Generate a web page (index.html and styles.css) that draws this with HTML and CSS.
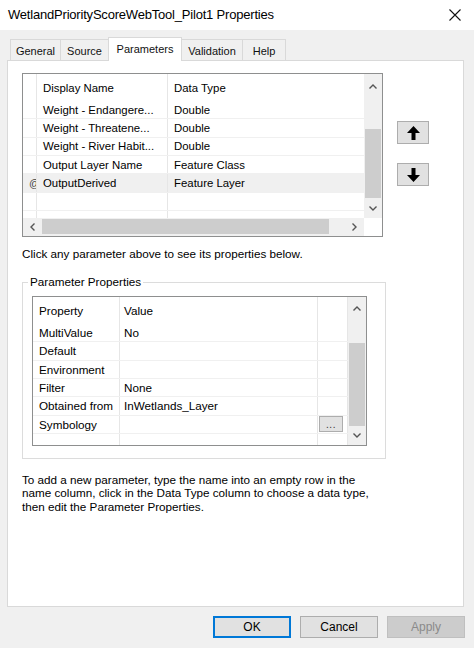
FILE: index.html
```html
<!DOCTYPE html>
<html>
<head>
<meta charset="utf-8">
<link rel="stylesheet" href="styles.css">
</head>
<body>
<div class="titlebar">
  <span class="title">WetlandPriorityScoreWebTool_Pilot1 Properties</span>
  <svg class="close" viewBox="0 0 12 12" width="12" height="12"><path d="M0.5 0.5 L11.5 11.5 M11.5 0.5 L0.5 11.5" stroke="#111" stroke-width="1.1" fill="none"/></svg>
</div>
<div class="tabs">
  <div class="tab t-general">General</div>
  <div class="tab t-source">Source</div>
  <div class="tab active t-params">Parameters</div>
  <div class="tab t-valid">Validation</div>
  <div class="tab t-help">Help</div>
</div>
<div class="panel">
  <div class="toprow">
    <div class="listbox">
      <div class="lgrid">
        <div class="lrow head"><div class="ind"></div><div class="c1">Display Name</div><div class="c2">Data Type</div></div>
        <div class="lrow"><div class="ind"></div><div class="c1">Weight - Endangere...</div><div class="c2">Double</div></div>
        <div class="lrow"><div class="ind"></div><div class="c1">Weight - Threatene...</div><div class="c2">Double</div></div>
        <div class="lrow"><div class="ind"></div><div class="c1">Weight - River Habit...</div><div class="c2">Double</div></div>
        <div class="lrow"><div class="ind"></div><div class="c1">Output Layer Name</div><div class="c2">Feature Class</div></div>
        <div class="lrow sel"><div class="ind"><span class="mark">@</span></div><div class="c1">OutputDerived</div><div class="c2">Feature Layer</div></div>
        <div class="lrow"><div class="ind"></div><div class="c1"></div><div class="c2"></div></div>
        <div class="lrow part"><div class="ind"></div><div class="c1"></div><div class="c2"></div></div>
      </div>
      <div class="vscroll">
        <div class="sbtn up1"><svg viewBox="0 0 8 5" width="8" height="5"><path d="M0.5 4.5 L4 1 L7.5 4.5" stroke="#555" stroke-width="1.4" fill="none"/></svg></div>
        <div class="track"><div class="vthumb t1"></div></div>
        <div class="sbtn dn1"><svg viewBox="0 0 8 5" width="8" height="5"><path d="M0.5 0.5 L4 4 L7.5 0.5" stroke="#555" stroke-width="1.4" fill="none"/></svg></div>
      </div>
      <div class="hscroll">
        <div class="hbtn"><svg viewBox="0 0 5 8" width="5" height="8"><path d="M4.5 0.5 L1 4 L4.5 7.5" stroke="#555" stroke-width="1.4" fill="none"/></svg></div>
        <div class="htrack"><div class="hthumb"></div></div>
        <div class="hbtn"><svg viewBox="0 0 5 8" width="5" height="8"><path d="M0.5 0.5 L4 4 L0.5 7.5" stroke="#555" stroke-width="1.4" fill="none"/></svg></div>
      </div>
      <div class="corner"></div>
    </div>
    <div class="movebtns">
      <div class="move"><svg viewBox="0 0 13 14" width="13" height="14"><path d="M6.5 0 L13 7 L8.5 7 L8.5 14 L4.5 14 L4.5 7 L0 7 Z" fill="#000"/></svg></div>
      <div class="move"><svg viewBox="0 0 13 14" width="13" height="14"><path d="M6.5 14 L13 7 L8.5 7 L8.5 0 L4.5 0 L4.5 7 L0 7 Z" fill="#000"/></svg></div>
    </div>
  </div>
  <p class="hint">Click any parameter above to see its properties below.</p>
  <fieldset class="group">
    <legend>Parameter Properties</legend>
    <div class="propbox">
      <div class="pgrid">
        <div class="prow head"><div class="p1">Property</div><div class="p2">Value</div><div class="p3"></div></div>
        <div class="prow"><div class="p1">MultiValue</div><div class="p2">No</div><div class="p3"></div></div>
        <div class="prow"><div class="p1">Default</div><div class="p2"></div><div class="p3"></div></div>
        <div class="prow"><div class="p1">Environment</div><div class="p2"></div><div class="p3"></div></div>
        <div class="prow"><div class="p1">Filter</div><div class="p2">None</div><div class="p3"></div></div>
        <div class="prow"><div class="p1">Obtained from</div><div class="p2">InWetlands_Layer</div><div class="p3"></div></div>
        <div class="prow"><div class="p1">Symbology</div><div class="p2"></div><div class="p3"><div class="dots">...</div></div></div>
        <div class="prow part"><div class="p1"></div><div class="p2"></div><div class="p3"></div></div>
      </div>
      <div class="vscroll">
        <div class="sbtn up2"><svg viewBox="0 0 8 5" width="8" height="5"><path d="M0.5 4.5 L4 1 L7.5 4.5" stroke="#555" stroke-width="1.4" fill="none"/></svg></div>
        <div class="track"><div class="vthumb t2"></div></div>
        <div class="sbtn dn2"><svg viewBox="0 0 8 5" width="8" height="5"><path d="M0.5 0.5 L4 4 L7.5 0.5" stroke="#555" stroke-width="1.4" fill="none"/></svg></div>
      </div>
    </div>
  </fieldset>
  <p class="help"><span>To add a new parameter, type the name into an empty row in the</span><span>name column, click in the Data Type column to choose a data type,</span><span>then edit the Parameter Properties.</span></p>
</div>
<div class="footer">
  <div class="btn ok">OK</div>
  <div class="btn">Cancel</div>
  <div class="btn disabled">Apply</div>
</div>
</body>
</html>
```

FILE: styles.css
```css
* { box-sizing: border-box; }
html, body { margin: 0; padding: 0; }
body {
  width: 474px;
  height: 648px;
  overflow: hidden;
  background: #f0f0f0;
  font-family: "Liberation Sans", Arial, sans-serif;
  color: #000;
}

.titlebar {
  height: 30px;
  background: #fff;
  display: flex;
  align-items: center;
  justify-content: space-between;
  padding: 0 13px 2px 8px;
}
.title { font-size: 13px; letter-spacing: -0.2px; white-space: nowrap; }
.close { display: block; margin-top: 2px; }

.tabs {
  height: 30px;
  display: flex;
  align-items: flex-end;
  padding-left: 10px;
  font-size: 11px;
}
.tab {
  height: 21px;
  border: 1px solid #d9d9d9;
  border-bottom: 0;
  margin-right: -1px;
  display: flex;
  align-items: center;
  justify-content: center;
  padding-top: 2px;
  background: #f0f0f0;
  color: #111;
}
.t-general { width: 51px; }
.t-source { width: 49px; }
.t-params { width: 74px; }
.t-valid { width: 62px; }
.t-help { width: 44px; }
.tab.active {
  height: 24px;
  margin-bottom: -1px;
  background: #fff;
  position: relative;
  z-index: 1;
  padding-top: 0;
  padding-bottom: 2px;
}

.panel {
  margin: 0 10px 0 7px;
  height: 547px;
  background: #fff;
  border: 1px solid #d9d9d9;
  padding: 12px 0 0 14px;
}

.toprow { display: flex; gap: 14px; }

.listbox {
  width: 361px;
  height: 164px;
  border: 1px solid #8e8f8f;
  display: grid;
  grid-template-columns: 1fr 18px;
  grid-template-rows: 1fr 18px;
  font-size: 11.4px;
}
.lgrid { overflow: hidden; }
.lrow {
  display: grid;
  grid-template-columns: 14px 131px 1fr;
  height: 18.33px;
  border-bottom: 1px solid #f0f0f0;
}
.lrow.head { height: 27px; border-bottom: 0; }
.lrow.part { height: 8px; border-bottom: 0; }
.lrow.sel { background: #f0f0f0; }
.lrow > div { display: flex; align-items: center; white-space: nowrap; overflow: hidden; }
.ind { border-right: 1px solid #e6e6e6; padding-left: 6px; }
.c1 { border-right: 1px solid #e6e6e6; padding-left: 6px; }
.c2 { padding-left: 6px; }
.mark { font-size: 11px; color: #444; }

.vscroll {
  background: #f0f0f0;
  display: flex;
  flex-direction: column;
}
.sbtn { display: flex; align-items: center; justify-content: center; }
.up1 { height: 22px; padding-top: 2px; }
.dn1 { height: 20px; }
.up2 { height: 23px; }
.dn2 { height: 19px; }
.track { flex: 1; padding: 0 1px; }
.vthumb { background: #cdcdcd; }
.t1 { margin-top: 33px; height: 69px; }
.t2 { margin-top: 23px; height: 83px; }

.hscroll {
  background: #f0f0f0;
  display: flex;
}
.hbtn { width: 19px; display: flex; align-items: center; justify-content: center; }
.htrack { flex: 1; padding: 1px 0 2px; }
.hthumb { width: 287px; height: 100%; background: #cdcdcd; }
.corner { background: #fff; }

.movebtns {
  display: flex;
  flex-direction: column;
  gap: 19px;
  margin-top: 48px;
}
.move {
  width: 32px;
  height: 23px;
  background: #e1e1e1;
  border: 1px solid #adadad;
  display: flex;
  align-items: center;
  justify-content: center;
}

.hint {
  margin: 10px 0 0;
  font-size: 11.7px;
  line-height: 14px;
  white-space: nowrap;
}

.group {
  margin: 14px 0 0;
  width: 364px;
  padding: 7px 17px 12px 9px;
  border: 1px solid #dcdcdc;
  min-width: 0;
}
.group legend {
  padding: 0 2px;
  margin-left: -4px;
  font-size: 11.7px;
  line-height: 14px;
}

.propbox {
  width: 335px;
  height: 150px;
  border: 1px solid #8e8f8f;
  display: grid;
  grid-template-columns: 1fr 18px;
  font-size: 11.7px;
}
.pgrid { overflow: hidden; }
.prow {
  display: grid;
  grid-template-columns: 87px 198px 1fr;
  height: 18.33px;
  border-bottom: 1px solid #f0f0f0;
}
.prow.head { height: 27px; border-bottom: 0; }
.prow.part { height: 12px; border-bottom: 0; }
.prow > div { display: flex; align-items: center; white-space: nowrap; overflow: hidden; }
.p1 { border-right: 1px solid #e6e6e6; padding-left: 6px; }
.p2 { border-right: 1px solid #e6e6e6; padding-left: 4px; }
.p3 { border-right: 1px solid #e6e6e6; padding-left: 1px; }
.dots {
  width: 24px;
  height: 16px;
  background: #e1e1e1;
  border: 1px solid #adadad;
  font-size: 10px;
  color: #333;
  display: flex;
  align-items: center;
  justify-content: center;
  letter-spacing: 0.5px;
}

.help {
  margin: 14px 0 0;
  font-size: 11.7px;
  line-height: 13.33px;
}
.help span { display: block; white-space: nowrap; }

.footer {
  display: flex;
  justify-content: flex-end;
  gap: 9px;
  padding: 9px 9px 0 0;
}
.btn {
  width: 78px;
  height: 22px;
  background: #e1e1e1;
  border: 1px solid #adadad;
  font-size: 12px;
  display: flex;
  align-items: center;
  justify-content: center;
}
.btn.ok { border: 2px solid #0078d7; }
.btn.disabled { background: #cccccc; border-color: #bfbfbf; color: #8a8a8a; }
```
